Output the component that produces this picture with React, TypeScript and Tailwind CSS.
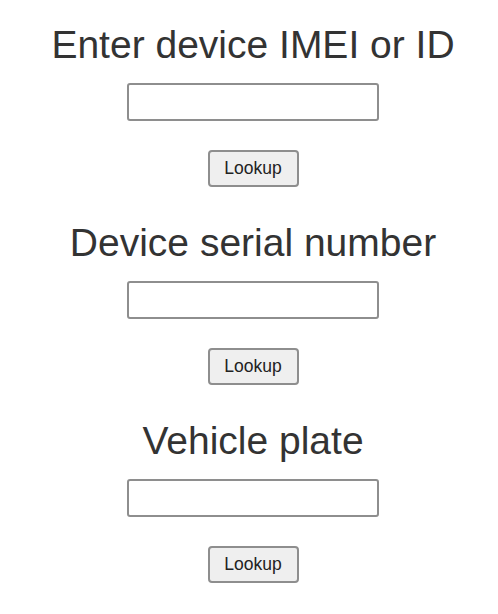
import React from 'react';

const sections = ['Enter device IMEI or ID', 'Device serial number', 'Vehicle plate'];

function LookupBlock({ title }: { title: string }) {
  return (
    <div className="flex flex-col items-center">
      <h1 className="text-[39px] leading-[42px] text-[#333333]">{title}</h1>
      <input
        type="text"
        className="mt-[17px] w-[252px] h-[38px] border-2 border-[#8e8e8e] rounded-[3px] bg-white px-1 outline-none"
      />
      <button className="mt-[29px] w-[91px] h-[37px] border-2 border-[#8e8e8e] rounded-[4px] bg-[#efefef] text-[17.5px] text-[#222222]">
        Lookup
      </button>
    </div>
  );
}

export default function App() {
  return (
    <div className="min-h-screen bg-white pt-[24px] pl-[8px] flex flex-col gap-[35px] font-['Liberation_Sans',Arial,sans-serif]">
      {sections.map((s) => (
        <LookupBlock key={s} title={s} />
      ))}
    </div>
  );
}
